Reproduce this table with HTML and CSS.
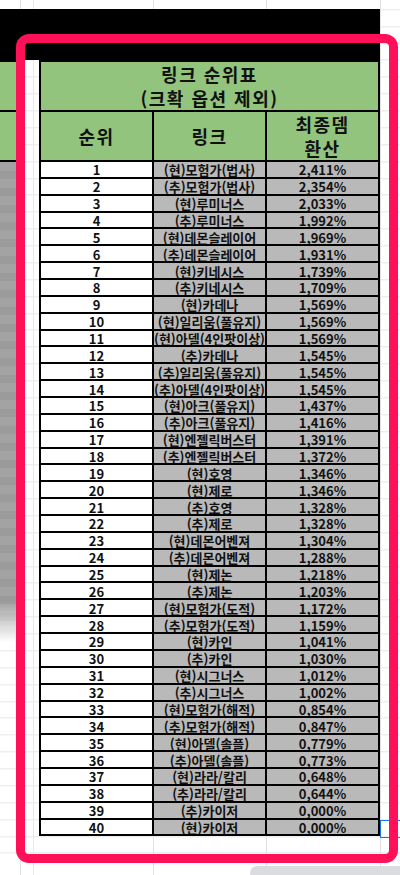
FILE: index.html
```html
<!DOCTYPE html>
<html lang="ko">
<head>
<meta charset="utf-8">
<title>링크 순위표</title>
<link rel="stylesheet" href="styles.css">
</head>
<body>
<div class="sheet">
  <div class="topgap"></div>
  <div class="band"></div>
  <div class="main">
    <div class="stub">
      <div class="stub-head">
        <div class="stub-cell"></div>
        <div class="stub-cell"></div>
      </div>
      <div class="stub-blur"></div>
    </div>
    <div class="gutter"></div>
    <div class="tbl">
      <div class="cell title">링크 순위표<br>(크확 옵션 제외)</div>
      <div class="cell head">순위</div>
      <div class="cell head">링크</div>
      <div class="cell head">최종뎀<br>환산</div>

      <div class="cell rank">1</div><div class="cell gray"><span>(현)모험가(법사)</span></div><div class="cell gray">2,411%</div>
      <div class="cell rank">2</div><div class="cell gray"><span>(추)모험가(법사)</span></div><div class="cell gray">2,354%</div>
      <div class="cell rank">3</div><div class="cell gray"><span>(현)루미너스</span></div><div class="cell gray">2,033%</div>
      <div class="cell rank">4</div><div class="cell gray"><span>(추)루미너스</span></div><div class="cell gray">1,992%</div>
      <div class="cell rank">5</div><div class="cell gray"><span>(현)데몬슬레이어</span></div><div class="cell gray">1,969%</div>
      <div class="cell rank">6</div><div class="cell gray"><span>(추)데몬슬레이어</span></div><div class="cell gray">1,931%</div>
      <div class="cell rank">7</div><div class="cell gray"><span>(현)키네시스</span></div><div class="cell gray">1,739%</div>
      <div class="cell rank">8</div><div class="cell gray"><span>(추)키네시스</span></div><div class="cell gray">1,709%</div>
      <div class="cell rank">9</div><div class="cell gray"><span>(현)카데나</span></div><div class="cell gray">1,569%</div>
      <div class="cell rank">10</div><div class="cell gray"><span>(현)일리움(풀유지)</span></div><div class="cell gray">1,569%</div>
      <div class="cell rank">11</div><div class="cell gray"><span>(현)아델(4인팟이상)</span></div><div class="cell gray">1,569%</div>
      <div class="cell rank">12</div><div class="cell gray"><span>(추)카데나</span></div><div class="cell gray">1,545%</div>
      <div class="cell rank">13</div><div class="cell gray"><span>(추)일리움(풀유지)</span></div><div class="cell gray">1,545%</div>
      <div class="cell rank">14</div><div class="cell gray"><span>(추)아델(4인팟이상)</span></div><div class="cell gray">1,545%</div>
      <div class="cell rank">15</div><div class="cell gray"><span>(현)아크(풀유지)</span></div><div class="cell gray">1,437%</div>
      <div class="cell rank">16</div><div class="cell gray"><span>(추)아크(풀유지)</span></div><div class="cell gray">1,416%</div>
      <div class="cell rank">17</div><div class="cell gray"><span>(현)엔젤릭버스터</span></div><div class="cell gray">1,391%</div>
      <div class="cell rank">18</div><div class="cell gray"><span>(추)엔젤릭버스터</span></div><div class="cell gray">1,372%</div>
      <div class="cell rank">19</div><div class="cell gray"><span>(현)호영</span></div><div class="cell gray">1,346%</div>
      <div class="cell rank">20</div><div class="cell gray"><span>(현)제로</span></div><div class="cell gray">1,346%</div>
      <div class="cell rank">21</div><div class="cell gray"><span>(추)호영</span></div><div class="cell gray">1,328%</div>
      <div class="cell rank">22</div><div class="cell gray"><span>(추)제로</span></div><div class="cell gray">1,328%</div>
      <div class="cell rank">23</div><div class="cell gray"><span>(현)데몬어벤져</span></div><div class="cell gray">1,304%</div>
      <div class="cell rank">24</div><div class="cell gray"><span>(추)데몬어벤져</span></div><div class="cell gray">1,288%</div>
      <div class="cell rank">25</div><div class="cell gray"><span>(현)제논</span></div><div class="cell gray">1,218%</div>
      <div class="cell rank">26</div><div class="cell gray"><span>(추)제논</span></div><div class="cell gray">1,203%</div>
      <div class="cell rank">27</div><div class="cell gray"><span>(현)모험가(도적)</span></div><div class="cell gray">1,172%</div>
      <div class="cell rank">28</div><div class="cell gray"><span>(추)모험가(도적)</span></div><div class="cell gray">1,159%</div>
      <div class="cell rank">29</div><div class="cell gray"><span>(현)카인</span></div><div class="cell gray">1,041%</div>
      <div class="cell rank">30</div><div class="cell gray"><span>(추)카인</span></div><div class="cell gray">1,030%</div>
      <div class="cell rank">31</div><div class="cell gray"><span>(현)시그너스</span></div><div class="cell gray">1,012%</div>
      <div class="cell rank">32</div><div class="cell gray"><span>(추)시그너스</span></div><div class="cell gray">1,002%</div>
      <div class="cell rank">33</div><div class="cell gray"><span>(현)모험가(해적)</span></div><div class="cell gray">0,854%</div>
      <div class="cell rank">34</div><div class="cell gray"><span>(추)모험가(해적)</span></div><div class="cell gray">0,847%</div>
      <div class="cell rank">35</div><div class="cell gray"><span>(현)아델(솔플)</span></div><div class="cell gray">0,779%</div>
      <div class="cell rank">36</div><div class="cell gray"><span>(추)아델(솔플)</span></div><div class="cell gray">0,773%</div>
      <div class="cell rank">37</div><div class="cell gray"><span>(현)라라/칼리</span></div><div class="cell gray">0,648%</div>
      <div class="cell rank">38</div><div class="cell gray"><span>(추)라라/칼리</span></div><div class="cell gray">0,644%</div>
      <div class="cell rank">39</div><div class="cell gray"><span>(추)카이저</span></div><div class="cell gray">0,000%</div>
      <div class="cell rank">40</div><div class="cell gray"><span>(현)카이저</span></div><div class="cell gray">0,000%</div>
    </div>
  </div>
  <div class="sel"></div>
  <div class="frame"></div>
  <div class="scrollbar"></div>
</div>
</body>
</html>
```

FILE: styles.css
```css
html, body {
  margin: 0;
  padding: 0;
  background: #ffffff;
}

.sheet {
  position: relative;
  width: 400px;
  height: 875px;
  overflow: hidden;
  background-color: #ffffff;
  background-image:
    linear-gradient(to right,
      transparent 0 20px, #e2e2e2 20px 21px,
      transparent 21px 33px, #e8e8e8 33px 34px,
      transparent 34px 153px, #e2e2e2 153px 154px,
      transparent 154px 266px, #e2e2e2 266px 267px,
      transparent 267px 380px, #e2e2e2 380px 381px,
      transparent 381px),
    repeating-linear-gradient(to bottom,
      transparent 0 15.87px, #e6e6e6 15.87px 16.87px);
  background-position: 0 0, 0 -6.7px;
  font-family: "Noto Sans CJK KR", "Noto Sans", sans-serif;
  font-weight: 700;
  color: #111111;
}

.topgap {
  height: 9px;
}

.band {
  width: 380px;
  height: 51px;
  background: #000000;
}

.main {
  display: flex;
  align-items: flex-start;
}

.stub {
  width: 20px;
  display: flex;
  flex-direction: column;
}

.stub-head {
  background: #000000;
  padding: 2px 0;
  display: grid;
  grid-template-rows: 48px 48px;
  row-gap: 2px;
}

.stub-cell {
  background: #93c47d;
}

.stub-blur {
  height: 480px;
  background:
    linear-gradient(to bottom, rgba(255,255,255,0) 0, rgba(255,255,255,0) 440px, #ffffff 480px),
    repeating-linear-gradient(to bottom, #a3a3a3 0 9px, #9b9b9b 9px 17px),
    #a0a0a0;
}

.gutter {
  width: 19px;
}

.tbl {
  width: 341px;
  box-sizing: border-box;
  background: #000000;
  padding: 2px;
  display: grid;
  grid-template-columns: repeat(3, minmax(0, 1fr));
  grid-template-rows: 48px 48px repeat(40, 14.87px);
  gap: 2px;
}

.cell {
  display: flex;
  align-items: center;
  justify-content: center;
  overflow: hidden;
  white-space: nowrap;
  text-align: center;
  font-size: 13px;
  line-height: 13px;
  padding-top: 1px;
  box-sizing: border-box;
}

.cell span {
  flex: none;
}

.title {
  grid-column: 1 / 4;
  background: #93c47d;
  font-size: 18px;
  letter-spacing: 1.5px;
  line-height: 24px;
  white-space: normal;
  padding-top: 0;
}

.head {
  background: #93c47d;
  font-size: 18px;
  letter-spacing: 1.5px;
  line-height: 24px;
  white-space: normal;
  padding-top: 0;
}

.rank {
  background: #ffffff;
  font-weight: 600;
}

.gray {
  background: #b9b9b9;
}

.sel {
  position: absolute;
  left: 380px;
  top: 820px;
  width: 30px;
  height: 16px;
  border: 1.5px solid #1a73e8;
}

.frame {
  position: absolute;
  left: 16px;
  top: 34px;
  width: 382px;
  height: 829px;
  box-sizing: border-box;
  border: 9.5px solid #ff1058;
  border-radius: 13px;
}

.scrollbar {
  position: absolute;
  left: 250px;
  top: 866px;
  width: 170px;
  height: 14px;
  border-radius: 7px;
  background: #dadce0;
}
```
